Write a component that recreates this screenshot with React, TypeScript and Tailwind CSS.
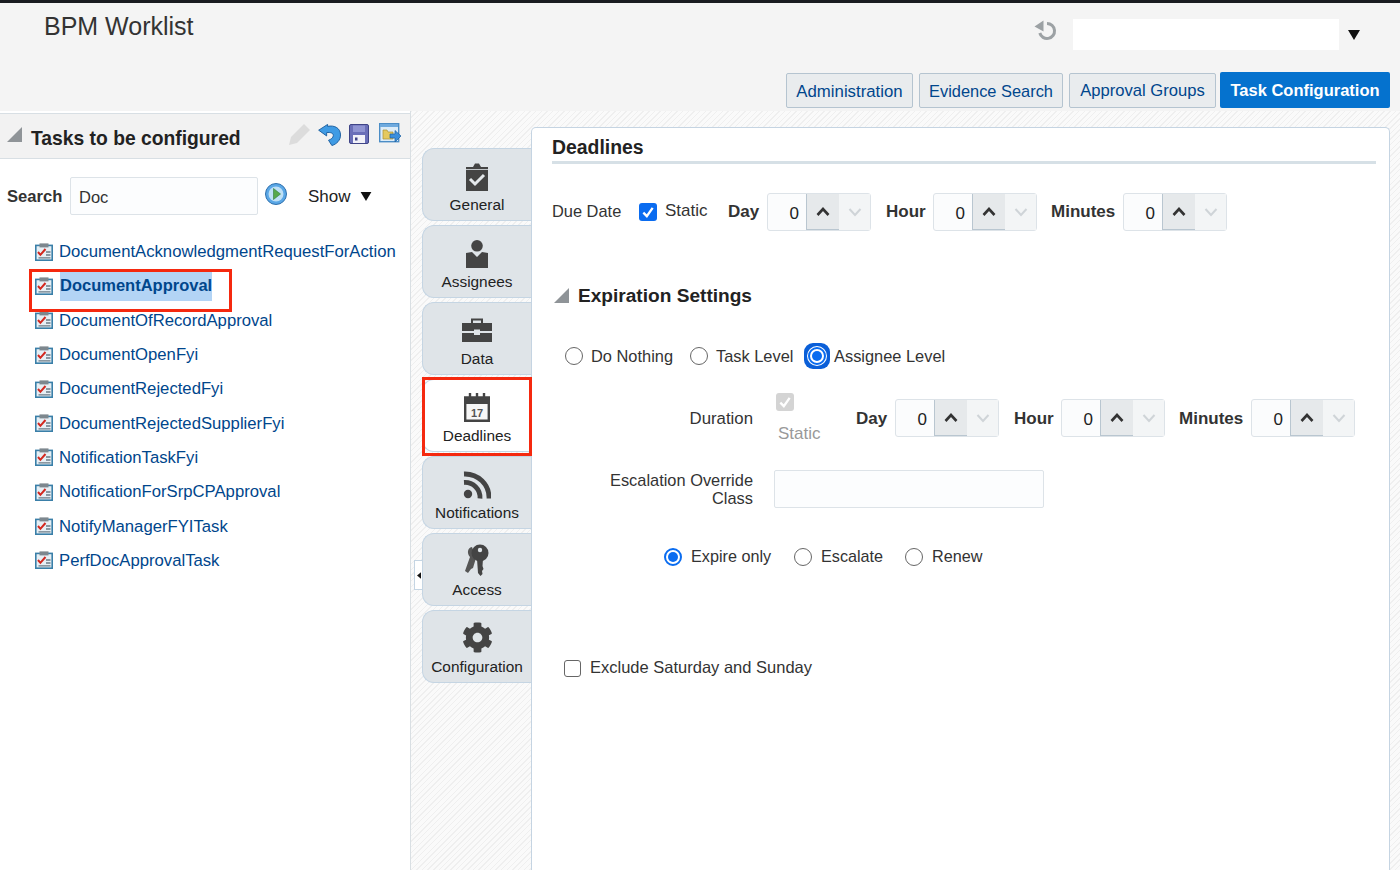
import type { ReactNode } from "react"
import { FaCog } from "react-icons/fa"

const HATCH = "bg-[repeating-linear-gradient(135deg,#efefef_0,#efefef_1px,#fafafa_1px,#fafafa_4px)]"

const tasks = [
  "DocumentAcknowledgmentRequestForAction",
  "DocumentApproval",
  "DocumentOfRecordApproval",
  "DocumentOpenFyi",
  "DocumentRejectedFyi",
  "DocumentRejectedSupplierFyi",
  "NotificationTaskFyi",
  "NotificationForSrpCPApproval",
  "NotifyManagerFYITask",
  "PerfDocApprovalTask",
]

const Caret = ({ className }: { className: string }) => (
  <svg viewBox="0 0 12 10" className={className}>
    <path d="M0 0h12L6 10z" fill="#111" />
  </svg>
)

const Corner = ({ className }: { className: string }) => (
  <svg viewBox="0 0 16 16" className={className}>
    <path d="M16 0v16H0z" fill="#8f9498" />
  </svg>
)

const TaskIcon = () => (
  <svg viewBox="0 0 18 18" className="w-[18px] h-[18px] shrink-0">
    <rect x="0.8" y="2.4" width="16.4" height="14.8" fill="#e6eff5" stroke="#3a7fa8" strokeWidth="1.6" />
    <rect x="4.5" y="0.4" width="9" height="4" fill="#7d878e" />
    <path d="M3 9l2.400 2.800L10.500 6" fill="none" stroke="#d3281f" strokeWidth="2" />
    <path d="M11 9h4.500M11 12h4.500M3.500 14.800h12" stroke="#6c7c87" strokeWidth="1.300" />
  </svg>
)

const PencilIcon = () => (
  <svg viewBox="0 0 24 24" className="w-[24px] h-[24px]">
    <path d="M1 23l2-8L16 2l6 6L9 21z" fill="#dcdcdc" />
  </svg>
)

const UndoIcon = () => (
  <svg viewBox="0 0 24 24" className="w-[23px] h-[23px]">
    <path d="M10 1.500L.7 7.500 9 13.500V10c4-.5 7 .5 7 3 0 2.500-2.500 4-5 5l3.500 5.500c5-1.500 9-5.500 9-11 0-7-6-10.500-13.500-9z" fill="#3f9be4" stroke="#1d5f9f" strokeWidth="1" />
  </svg>
)

const SaveIcon = () => (
  <svg viewBox="0 0 20 20" className="w-[20px] h-[20px]">
    <rect x="0.5" y="0.5" width="19" height="19" rx="1.500" fill="#6a6fb8" stroke="#3f4486" />
    <rect x="4" y="1.500" width="12" height="6.500" fill="#8f94d2" />
    <rect x="4" y="11" width="12" height="8" fill="#f1f1f8" />
    <rect x="6" y="13.500" width="2.500" height="3" fill="#3f4486" />
  </svg>
)

const FolderGoIcon = () => (
  <svg viewBox="0 0 22 22" className="w-[22px] h-[22px]">
    <rect x="0.7" y="0.7" width="19" height="18" fill="#dcecf8" stroke="#4b8dc6" strokeWidth="1.4" />
    <rect x="1" y="1" width="18" height="3" fill="#6faade" />
    <path d="M4 7h4l1 2h5v7H4z" fill="#e5c95f" stroke="#a98f35" strokeWidth="0.7" />
    <path d="M11 11h5V7.500l6 5.500-6 6v-4h-5z" fill="#3b8fdc" stroke="#1d5f9f" strokeWidth="0.7" />
  </svg>
)

const PlayIcon = () => (
  <svg viewBox="0 0 22 22" className="w-[22px] h-[22px]">
    <circle cx="11" cy="11" r="10.500" fill="#5aa7e6" stroke="#2f70ad" />
    <circle cx="11" cy="11" r="7.500" fill="#bfe0f6" />
    <path d="M8.500 5.500L15.500 11l-7 5.500z" fill="#57a84a" stroke="#2f7a3a" strokeWidth="0.6" />
  </svg>
)

const RefreshIcon = () => (
  <svg viewBox="0 0 24 24" className="w-[24px] h-[24px]">
    <path d="M13 5.500A7.500 7.500 0 1 1 5.800 15" fill="none" stroke="#9ca1a4" strokeWidth="3" />
    <path d="M0.500 8.500L9.500 2.500v11z" fill="#9ca1a4" />
  </svg>
)

const GeneralIcon = () => (
  <svg viewBox="0 0 22 28" className="w-[22px] h-[28px]">
    <path d="M0 4h7l2-3.500h4L15 4h7v24H0z" fill="#444" />
    <path d="M4 16l5 5 9-9" fill="none" stroke="#e4e8eb" strokeWidth="3" />
    <path d="M0 6.500h22" stroke="#dfe4e8" strokeWidth="0.8" />
  </svg>
)

const AssigneesIcon = () => (
  <svg viewBox="0 0 22 28" className="w-[22px] h-[28px]">
    <circle cx="11" cy="5.800" r="5.800" fill="#444" />
    <path d="M0 13l6-1 5 5 5-5 6 1v15H0z" fill="#444" />
  </svg>
)

const DataIcon = () => (
  <svg viewBox="0 0 30 24" className="w-[30px] h-[24px] mb-[3px]">
    <path d="M10 5V1.500h10V5" fill="none" stroke="#444" strokeWidth="2" />
    <path d="M0 5h30v8H18v-1.500h-6V13H0zM0 15h12v2h6v-2h12v9H0z" fill="#444" />
    <rect x="12.500" y="12" width="5" height="4" fill="#dfe4e8" />
  </svg>
)

const CalendarIcon = () => (
  <svg viewBox="0 0 26 29" className="w-[26px] h-[29px]">
    <path d="M1.200 4.500h23.600v23.300H1.200z" fill="#f7f7f7" stroke="#444" strokeWidth="2.400" />
    <path d="M1 4h24v7H1z" fill="#444" />
    <path d="M6 0v5M13 0v5M20 0v5" stroke="#444" strokeWidth="2.400" />
    <text x="13" y="24" textAnchor="middle" fontSize="11" fontWeight="700" fill="#555" fontFamily="Liberation Sans">17</text>
  </svg>
)

const RssIcon = () => (
  <svg viewBox="0 0 28 28" className="w-[28px] h-[28px]">
    <circle cx="5" cy="23" r="4.200" fill="#444" />
    <path d="M1 11.500C10 11 17.500 18 17 27.500" fill="none" stroke="#444" strokeWidth="4.800" />
    <path d="M1 3C15 2.500 26.500 13.500 26 27.500" fill="none" stroke="#444" strokeWidth="4.800" />
  </svg>
)

const KeysIcon = () => (
  <svg viewBox="0 0 26 32" className="w-[26px] h-[32px]">
    <path d="M8 3C3 4 3 10 6 13L1 27l3 2 3-4 2-1 3-10" fill="#555" />
    <circle cx="16" cy="9" r="8.500" fill="#444" />
    <circle cx="16" cy="6" r="2.200" fill="#dfe4e8" />
    <path d="M13 15h6l-.5 7 1 3-1.500 2 .5 3-2 2-2.500-3z" fill="#444" />
  </svg>
)

const Chevron = ({ up, color }: { up?: boolean; color: string }) => (
  <svg viewBox="0 0 14 9" className="w-[14px] h-[9px]">
    <path d={up ? "M1.500 8L7 2l5.500 6" : "M1.500 1L7 7l5.500-6"} fill="none" stroke={color} strokeWidth={up ? 2.600 : 2} />
  </svg>
)

const Spinner = () => (
  <div className="flex w-[104px] h-[38px] shrink-0 border border-[#dde3e8] rounded-[3px] bg-[#fbfcfd]">
    <div className="w-[38px] flex items-center justify-end pr-[7px] pt-[3px] text-[17px] text-[#222]">0</div>
    <div className="w-[33px] flex items-center justify-center bg-[#e6e9eb] border-l border-b border-[#b9c6d0]">
      <Chevron up color="#333" />
    </div>
    <div className="flex-1 flex items-center justify-center bg-[#f3f5f6]">
      <Chevron color="#cfd4d8" />
    </div>
  </div>
)

const Radio = ({ checked }: { checked?: boolean }) => (
  <span className={`w-[18px] h-[18px] rounded-full shrink-0 flex items-center justify-center bg-white border ${checked ? "border-[#0a6cf0] border-2" : "border-[#666]"}`}>
    {checked && <span className="w-[10px] h-[10px] rounded-full bg-[#0a6cf0]" />}
  </span>
)

const Check = () => (
  <svg viewBox="0 0 12 12" className="w-[14px] h-[14px]">
    <path d="M2 6.500l3 3 5-7" fill="none" stroke="#fff" strokeWidth="2" />
  </svg>
)

const Tab = ({ label, icon, active }: { label: string; icon: ReactNode; active?: boolean }) => (
  <div className={`relative h-[73px] w-[109px] rounded-l-[12px] border border-r-0 flex flex-col items-center ${active ? "bg-white border-[#c5d5e3]" : "bg-[#dfe4e8] border-[#c5d5e3]"}`}>
    <div className="h-[42px] flex items-end justify-center">{icon}</div>
    <div className="mt-[4px] text-[15.400px] leading-[20px] text-[#222]">{label}</div>
    {active && <div className="absolute -left-[1px] -top-[3px] -bottom-[5px] -right-[1px] border-[3px] border-[#f5290f]" />}
  </div>
)

const Link = ({ children, className }: { children: ReactNode; className: string }) => (
  <div className={`h-[35px] flex items-center justify-center pt-[2px] border border-[#b5c4d0] rounded-[2px] bg-[#e9ecee] text-[#00468c] ${className}`}>{children}</div>
)

const App = () => {
  return (
    <div className="w-[1400px] h-[870px] overflow-hidden flex flex-col bg-white font-['Liberation_Sans',sans-serif] text-[#222]">
      <div className="h-[3px] bg-[#1a1c20]" />
      <div className="h-[108px] shrink-0 bg-[#f4f4f4] flex flex-col">
        <div className="flex h-[69px]">
          <div className="ml-[44px] mt-[7px] text-[25px] leading-[32px] text-[#333]">BPM Worklist</div>
          <div className="ml-auto flex items-start pt-[16px]">
            <div className="mt-[-1px] mr-[15px]"><RefreshIcon /></div>
            <div className="w-[266px] h-[31px] bg-white" />
            <Caret className="w-[12px] h-[10px] ml-[9px] mt-[11px] mr-[40px]" />
          </div>
        </div>
        <div className="flex justify-end items-end pr-[10px] gap-[6px] h-[36px]">
          <Link className="w-[127px] text-[16.800px]">Administration</Link>
          <Link className="w-[144px] text-[16.400px]">Evidence Search</Link>
          <Link className="w-[147px] mr-[-2px] text-[16.600px]">Approval Groups</Link>
          <div className="w-[170px] h-[36px] flex items-center justify-center rounded-[2px] bg-[#0572ce] text-white font-bold text-[16.500px]">Task Configuration</div>
        </div>
      </div>

      <div className="flex-1 flex min-h-0 relative">
        <div className="w-[411px] shrink-0 border-r border-[#d9dfe3] pt-[2px]">
          <div className="h-[46px] bg-[#f2f2f2] border-t border-b border-[#d8dfe4] flex items-center">
            <Corner className="w-[15px] h-[15px] ml-[7px] mb-[4px]" />
            <div className="ml-[9px] text-[19.300px] font-bold text-[#222] mt-[6px]">Tasks to be configured</div>
            <div className="ml-auto flex items-center mr-[9px] mb-[4px]">
              <PencilIcon />
              <div className="ml-[6px]"><UndoIcon /></div>
              <div className="ml-[8px]"><SaveIcon /></div>
              <div className="ml-[10px]"><FolderGoIcon /></div>
            </div>
          </div>
          <div className="flex items-center h-[38px] mt-[18px]">
            <div className="ml-[7px] w-[63px] pt-[3px] font-bold text-[16.600px] text-[#333]">Search</div>
            <div className="w-[188px] h-[38px] border border-[#dde3e8] rounded-[2px] bg-[#fcfdfe] flex items-center pl-[8px] pt-[3px] text-[16.500px] text-[#333]">Doc</div>
            <div className="ml-[7px] mb-[5px]"><PlayIcon /></div>
            <div className="ml-[21px] text-[17px] text-[#222] mt-[1px]">Show</div>
            <Caret className="w-[12px] h-[9px] ml-[9px] mt-[1px]" />
          </div>
          <div className="mt-[19.500px] pl-[35px] flex flex-col">
            {tasks.map((t) => t === "DocumentApproval" ? (
              <div key={t} className="relative h-[34.3px] flex items-center">
                <div className="absolute left-[-6px] top-0 w-[203px] h-[43px] border-[3px] border-[#f5290f]" />
                <TaskIcon />
                <span className="ml-[7px] font-bold text-[16.500px] leading-[31px] text-[#00468c] bg-[#b3d4f5]">{t}</span>
              </div>
            ) : (
              <div key={t} className="h-[34.3px] flex items-center">
                <TaskIcon />
                <span className="ml-[6px] text-[16.700px] text-[#00468c]">{t}</span>
              </div>
            ))}
          </div>
        </div>

        <div className={`flex-1 flex pt-[16px] pr-[10px] ${HATCH}`}>
          <div className="w-[120px] shrink-0 pl-[11px] pt-[21px] flex flex-col gap-[4px]">
            <Tab label="General" icon={<GeneralIcon />} />
            <Tab label="Assignees" icon={<AssigneesIcon />} />
            <Tab label="Data" icon={<DataIcon />} />
            <Tab label="Deadlines" icon={<CalendarIcon />} active />
            <Tab label="Notifications" icon={<RssIcon />} />
            <Tab label="Access" icon={<KeysIcon />} />
            <Tab label="Configuration" icon={<FaCog className="w-[31px] h-[31px] text-[#444]" />} />
          </div>

          <div className="flex-1 bg-white border border-b-0 border-[#c5d4e2] rounded-t-[5px] pl-[20px]">
            <div className="h-[36px] mr-[13px] border-b-[3px] border-[#d6e0e6] text-[19.400px] font-bold text-[#222] leading-[38px]">Deadlines</div>

            <div className="flex items-center h-[38px] mt-[29px] text-[16.400px]">
              <div className="w-[87px] text-[#333] mb-[1px]">Due Date</div>
              <span className="w-[18px] h-[18px] rounded-[3px] bg-[#0a6cf0] flex items-center justify-center"><Check /></span>
              <div className="ml-[8px] w-[63px] text-[17px] text-[#333] mb-[2px]">Static</div>
              <div className="w-[39px] font-bold text-[#333] text-[17px]">Day</div>
              <Spinner />
              <div className="ml-[15px] w-[47px] font-bold text-[#333] text-[17px]">Hour</div>
              <Spinner />
              <div className="ml-[14px] w-[72px] font-bold text-[#333] text-[17px]">Minutes</div>
              <Spinner />
            </div>

            <div className="flex items-center h-[30px] mt-[50px]">
              <Corner className="w-[15px] h-[15px] ml-[2px] mb-[2px]" />
              <div className="ml-[9px] text-[19.100px] font-bold">Expiration Settings</div>
            </div>

            <div className="flex items-center h-[26px] mt-[32px] ml-[13px] text-[16.400px] text-[#333]">
              <Radio />
              <div className="ml-[8px] w-[99px] pt-[1px]">Do Nothing</div>
              <Radio />
              <div className="ml-[8px] w-[88px] pt-[1px]">Task Level</div>
              <span className="w-[26px] h-[26px] rounded-[9px] bg-[#0a5fd8] flex items-center justify-center">
                <span className="w-[20px] h-[20px] rounded-full bg-white flex items-center justify-center">
                  <span className="w-[18px] h-[18px] rounded-full border-2 border-[#0a6cf0] flex items-center justify-center">
                    <span className="w-[10px] h-[10px] rounded-full bg-[#0a6cf0]" />
                  </span>
                </span>
              </span>
              <div className="ml-[4px] pt-[1px]">Assignee Level</div>
            </div>

            <div className="flex mt-[24px] h-[54px]">
              <div className="w-[201px] text-right mt-[13px] text-[#333] text-[16.800px]">Duration</div>
              <div className="ml-[23px] w-[80px]">
                <span className="w-[18px] h-[18px] rounded-[3px] bg-[#d4d4d4] flex items-center justify-center"><Check /></span>
                <div className="mt-[10px] ml-[2px] text-[17px] text-[#999]">Static</div>
              </div>
              <div className="mt-[6px] flex items-center h-[38px]">
                <div className="w-[39px] pt-[1px] font-bold text-[#333] text-[17px]">Day</div>
                <Spinner />
                <div className="ml-[15px] w-[47px] pt-[1px] font-bold text-[#333] text-[17px]">Hour</div>
                <Spinner />
                <div className="ml-[14px] w-[72px] pt-[1px] font-bold text-[#333] text-[17px]">Minutes</div>
                <Spinner />
              </div>
            </div>

            <div className="flex mt-[23px] h-[38px]">
              <div className="w-[201px] text-right text-[16.400px] leading-[18px] text-[#333] pt-[1px]">Escalation Override<br />Class</div>
              <div className="ml-[21px] w-[270px] h-[38px] border border-[#dde3e8] rounded-[2px] bg-[#fcfdfe]" />
            </div>

            <div className="flex items-center h-[26px] mt-[36px] ml-[112px] text-[16.200px] text-[#333]">
              <Radio checked />
              <div className="ml-[9px] w-[103px] mb-[1px]">Expire only</div>
              <Radio />
              <div className="ml-[9px] w-[84px] mb-[1px]">Escalate</div>
              <Radio />
              <div className="ml-[9px] mb-[1px]">Renew</div>
            </div>

            <div className="flex items-center h-[26px] mt-[85px] ml-[12px] text-[16.500px] text-[#333]">
              <span className="w-[17px] h-[17px] rounded-[3px] border border-[#666] bg-white" />
              <div className="ml-[9px] mb-[1px]">Exclude Saturday and Sunday</div>
            </div>
          </div>
        </div>

        <div className="absolute left-[414px] top-[449px] w-[8px] h-[30px] bg-white border border-r-0 border-[#c5d5e3] flex items-center justify-center">
          <svg viewBox="0 0 5 8" className="w-[4px] h-[7px]"><path d="M5 0v8L0 4z" fill="#111" /></svg>
        </div>
      </div>
    </div>
  )
}

export default App
